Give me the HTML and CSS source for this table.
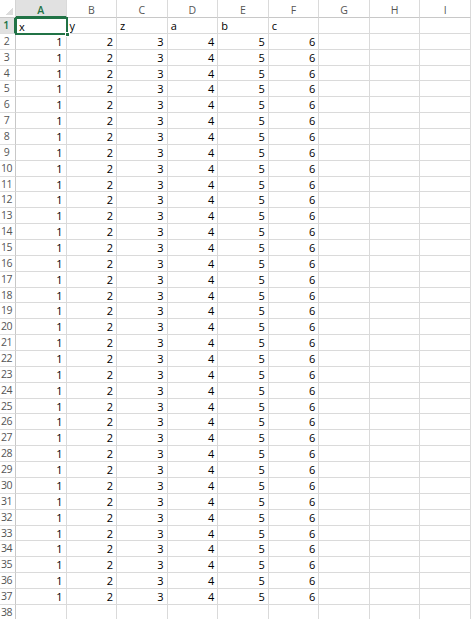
FILE: index.html
```html
<!DOCTYPE html>
<html>
<head>
<meta charset="utf-8">
<link rel="stylesheet" href="styles.css">
</head>
<body>
<div class="sheet">
<div class="corner"><span class="tri"></span></div><div class="ch sel">A</div><div class="ch">B</div><div class="ch">C</div><div class="ch">D</div><div class="ch">E</div><div class="ch">F</div><div class="ch">G</div><div class="ch">H</div><div class="ch">I</div>
<div class="rh sel">1</div><div class="c active">x<span class="handle"></span></div><div class="c">y</div><div class="c">z</div><div class="c">a</div><div class="c">b</div><div class="c">c</div><div class="c"></div><div class="c"></div><div class="c"></div>
<div class="rh">2</div><div class="c n">1</div><div class="c n">2</div><div class="c n">3</div><div class="c n">4</div><div class="c n">5</div><div class="c n">6</div><div class="c"></div><div class="c"></div><div class="c"></div>
<div class="rh">3</div><div class="c n">1</div><div class="c n">2</div><div class="c n">3</div><div class="c n">4</div><div class="c n">5</div><div class="c n">6</div><div class="c"></div><div class="c"></div><div class="c"></div>
<div class="rh">4</div><div class="c n">1</div><div class="c n">2</div><div class="c n">3</div><div class="c n">4</div><div class="c n">5</div><div class="c n">6</div><div class="c"></div><div class="c"></div><div class="c"></div>
<div class="rh">5</div><div class="c n">1</div><div class="c n">2</div><div class="c n">3</div><div class="c n">4</div><div class="c n">5</div><div class="c n">6</div><div class="c"></div><div class="c"></div><div class="c"></div>
<div class="rh">6</div><div class="c n">1</div><div class="c n">2</div><div class="c n">3</div><div class="c n">4</div><div class="c n">5</div><div class="c n">6</div><div class="c"></div><div class="c"></div><div class="c"></div>
<div class="rh">7</div><div class="c n">1</div><div class="c n">2</div><div class="c n">3</div><div class="c n">4</div><div class="c n">5</div><div class="c n">6</div><div class="c"></div><div class="c"></div><div class="c"></div>
<div class="rh">8</div><div class="c n">1</div><div class="c n">2</div><div class="c n">3</div><div class="c n">4</div><div class="c n">5</div><div class="c n">6</div><div class="c"></div><div class="c"></div><div class="c"></div>
<div class="rh">9</div><div class="c n">1</div><div class="c n">2</div><div class="c n">3</div><div class="c n">4</div><div class="c n">5</div><div class="c n">6</div><div class="c"></div><div class="c"></div><div class="c"></div>
<div class="rh">10</div><div class="c n">1</div><div class="c n">2</div><div class="c n">3</div><div class="c n">4</div><div class="c n">5</div><div class="c n">6</div><div class="c"></div><div class="c"></div><div class="c"></div>
<div class="rh">11</div><div class="c n">1</div><div class="c n">2</div><div class="c n">3</div><div class="c n">4</div><div class="c n">5</div><div class="c n">6</div><div class="c"></div><div class="c"></div><div class="c"></div>
<div class="rh">12</div><div class="c n">1</div><div class="c n">2</div><div class="c n">3</div><div class="c n">4</div><div class="c n">5</div><div class="c n">6</div><div class="c"></div><div class="c"></div><div class="c"></div>
<div class="rh">13</div><div class="c n">1</div><div class="c n">2</div><div class="c n">3</div><div class="c n">4</div><div class="c n">5</div><div class="c n">6</div><div class="c"></div><div class="c"></div><div class="c"></div>
<div class="rh">14</div><div class="c n">1</div><div class="c n">2</div><div class="c n">3</div><div class="c n">4</div><div class="c n">5</div><div class="c n">6</div><div class="c"></div><div class="c"></div><div class="c"></div>
<div class="rh">15</div><div class="c n">1</div><div class="c n">2</div><div class="c n">3</div><div class="c n">4</div><div class="c n">5</div><div class="c n">6</div><div class="c"></div><div class="c"></div><div class="c"></div>
<div class="rh">16</div><div class="c n">1</div><div class="c n">2</div><div class="c n">3</div><div class="c n">4</div><div class="c n">5</div><div class="c n">6</div><div class="c"></div><div class="c"></div><div class="c"></div>
<div class="rh">17</div><div class="c n">1</div><div class="c n">2</div><div class="c n">3</div><div class="c n">4</div><div class="c n">5</div><div class="c n">6</div><div class="c"></div><div class="c"></div><div class="c"></div>
<div class="rh">18</div><div class="c n">1</div><div class="c n">2</div><div class="c n">3</div><div class="c n">4</div><div class="c n">5</div><div class="c n">6</div><div class="c"></div><div class="c"></div><div class="c"></div>
<div class="rh">19</div><div class="c n">1</div><div class="c n">2</div><div class="c n">3</div><div class="c n">4</div><div class="c n">5</div><div class="c n">6</div><div class="c"></div><div class="c"></div><div class="c"></div>
<div class="rh">20</div><div class="c n">1</div><div class="c n">2</div><div class="c n">3</div><div class="c n">4</div><div class="c n">5</div><div class="c n">6</div><div class="c"></div><div class="c"></div><div class="c"></div>
<div class="rh">21</div><div class="c n">1</div><div class="c n">2</div><div class="c n">3</div><div class="c n">4</div><div class="c n">5</div><div class="c n">6</div><div class="c"></div><div class="c"></div><div class="c"></div>
<div class="rh">22</div><div class="c n">1</div><div class="c n">2</div><div class="c n">3</div><div class="c n">4</div><div class="c n">5</div><div class="c n">6</div><div class="c"></div><div class="c"></div><div class="c"></div>
<div class="rh">23</div><div class="c n">1</div><div class="c n">2</div><div class="c n">3</div><div class="c n">4</div><div class="c n">5</div><div class="c n">6</div><div class="c"></div><div class="c"></div><div class="c"></div>
<div class="rh">24</div><div class="c n">1</div><div class="c n">2</div><div class="c n">3</div><div class="c n">4</div><div class="c n">5</div><div class="c n">6</div><div class="c"></div><div class="c"></div><div class="c"></div>
<div class="rh">25</div><div class="c n">1</div><div class="c n">2</div><div class="c n">3</div><div class="c n">4</div><div class="c n">5</div><div class="c n">6</div><div class="c"></div><div class="c"></div><div class="c"></div>
<div class="rh">26</div><div class="c n">1</div><div class="c n">2</div><div class="c n">3</div><div class="c n">4</div><div class="c n">5</div><div class="c n">6</div><div class="c"></div><div class="c"></div><div class="c"></div>
<div class="rh">27</div><div class="c n">1</div><div class="c n">2</div><div class="c n">3</div><div class="c n">4</div><div class="c n">5</div><div class="c n">6</div><div class="c"></div><div class="c"></div><div class="c"></div>
<div class="rh">28</div><div class="c n">1</div><div class="c n">2</div><div class="c n">3</div><div class="c n">4</div><div class="c n">5</div><div class="c n">6</div><div class="c"></div><div class="c"></div><div class="c"></div>
<div class="rh">29</div><div class="c n">1</div><div class="c n">2</div><div class="c n">3</div><div class="c n">4</div><div class="c n">5</div><div class="c n">6</div><div class="c"></div><div class="c"></div><div class="c"></div>
<div class="rh">30</div><div class="c n">1</div><div class="c n">2</div><div class="c n">3</div><div class="c n">4</div><div class="c n">5</div><div class="c n">6</div><div class="c"></div><div class="c"></div><div class="c"></div>
<div class="rh">31</div><div class="c n">1</div><div class="c n">2</div><div class="c n">3</div><div class="c n">4</div><div class="c n">5</div><div class="c n">6</div><div class="c"></div><div class="c"></div><div class="c"></div>
<div class="rh">32</div><div class="c n">1</div><div class="c n">2</div><div class="c n">3</div><div class="c n">4</div><div class="c n">5</div><div class="c n">6</div><div class="c"></div><div class="c"></div><div class="c"></div>
<div class="rh">33</div><div class="c n">1</div><div class="c n">2</div><div class="c n">3</div><div class="c n">4</div><div class="c n">5</div><div class="c n">6</div><div class="c"></div><div class="c"></div><div class="c"></div>
<div class="rh">34</div><div class="c n">1</div><div class="c n">2</div><div class="c n">3</div><div class="c n">4</div><div class="c n">5</div><div class="c n">6</div><div class="c"></div><div class="c"></div><div class="c"></div>
<div class="rh">35</div><div class="c n">1</div><div class="c n">2</div><div class="c n">3</div><div class="c n">4</div><div class="c n">5</div><div class="c n">6</div><div class="c"></div><div class="c"></div><div class="c"></div>
<div class="rh">36</div><div class="c n">1</div><div class="c n">2</div><div class="c n">3</div><div class="c n">4</div><div class="c n">5</div><div class="c n">6</div><div class="c"></div><div class="c"></div><div class="c"></div>
<div class="rh">37</div><div class="c n">1</div><div class="c n">2</div><div class="c n">3</div><div class="c n">4</div><div class="c n">5</div><div class="c n">6</div><div class="c"></div><div class="c"></div><div class="c"></div>
<div class="rh">38</div><div class="c"></div><div class="c"></div><div class="c"></div><div class="c"></div><div class="c"></div><div class="c"></div><div class="c"></div><div class="c"></div><div class="c"></div>
</div>
</body>
</html>
```
FILE: styles.css
```css
html, body {
  margin: 0;
  padding: 0;
  background: #ffffff;
  overflow: hidden;
}
.sheet {
  display: grid;
  grid-template-columns: 16px repeat(9, 50.55px);
  grid-template-rows: 18px repeat(37, 15.86px) 16px;
  font-family: "Open Sans", "Liberation Sans", sans-serif;
  font-size: 11px;
  color: #000;
  width: 474px;
}
.sheet > div {
  box-sizing: border-box;
  white-space: nowrap;
  overflow: visible;
  line-height: 15px;
}
.corner {
  position: relative;
  border-right: 1px solid #d4d4d4;
  border-bottom: 1px solid #c8c8c8;
  background: #ffffff;
}
.tri {
  position: absolute;
  right: 2px;
  bottom: 2px;
  width: 8px;
  height: 8px;
  background: linear-gradient(to top left, #dcdcdc 50%, transparent 50%);
}
.ch {
  border-right: 1px solid #dadada;
  border-bottom: 1px solid #c8c8c8;
  text-align: center;
  color: #555;
  line-height: 21px !important;
  font-size: 10.5px;
  background: #ffffff;
}
.ch.sel {
  background: #e1e1e1;
  color: #217346;
  font-weight: 600;
  border-bottom: 2px solid #217346;
}
.rh {
  border-right: 1px solid #c8c8c8;
  border-bottom: 1px solid #dedede;
  color: #555;
  text-align: center;
  padding-right: 2px;
  letter-spacing: -0.4px;
  font-size: 10.5px;
}
.rh.sel {
  background: #e1e1e1;
  color: #217346;
  font-weight: 600;
  border-right: 2px solid #217346;
}
.c {
  border-right: 1px solid #dadada;
  border-bottom: 1px solid #dadada;
  padding: 0 3px 0 3px;
  text-align: left;
}
.c.n {
  text-align: right;
}
.c.active {
  position: relative;
  outline: 2px solid #217346;
  outline-offset: -1px;
  border-color: transparent;
  line-height: 18px !important;
}
.handle {
  position: absolute;
  right: -4px;
  bottom: -4px;
  width: 5px;
  height: 5px;
  background: #217346;
  border: 1px solid #ffffff;
  box-sizing: border-box;
}
```
